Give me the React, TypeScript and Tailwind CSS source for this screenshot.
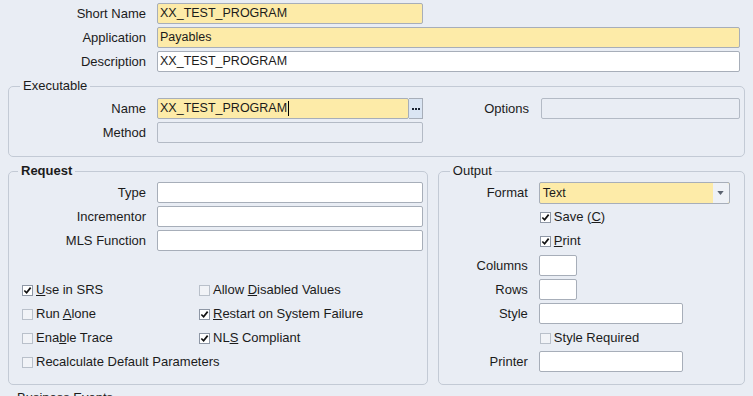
import React from 'react';

const font = { fontFamily: '"Liberation Sans", Arial, sans-serif' };

type Kind = 'yellow' | 'white' | 'disabled';

function Box({ kind, className = '', children }: { kind: Kind; className?: string; children?: React.ReactNode }) {
  const tone =
    kind === 'yellow'
      ? 'bg-[#fdeba8] border-[#a7aeb9]'
      : kind === 'white'
        ? 'bg-white border-[#a7aeb9]'
        : 'bg-[#e9edf4] border-[#b3bac5]';
  return (
    <div className={`h-[21px] border rounded-[2px] flex items-center pl-[2px] text-[12.5px] text-[#1b1b1b] ${tone} ${className}`}>
      {children}
    </div>
  );
}

function Row({ label, labelW, children }: { label: string; labelW: string; children: React.ReactNode }) {
  return (
    <div className="flex items-center">
      <span className={`${labelW} text-right pr-[11px] text-[13px] text-[#1b1b1b] shrink-0`}>{label}</span>
      {children}
    </div>
  );
}

function Check({ on, children }: { on?: boolean; children: React.ReactNode }) {
  return (
    <div className="flex items-center h-[24px] text-[13px] text-[#1b1b1b]">
      <span
        className={`w-[11px] h-[11px] border flex items-center justify-center mr-[3px] shrink-0 ${
          on ? 'bg-white border-[#8e97a5]' : 'bg-[#f1f3f7] border-[#b9c0ca]'
        }`}
      >
        {on && (
          <svg viewBox="0 0 10 10" className="w-[9px] h-[9px]">
            <path d="M1.5 5 L4 7.5 L8.5 1.8" fill="none" stroke="#111" strokeWidth="1.9" />
          </svg>
        )}
      </span>
      <span>{children}</span>
    </div>
  );
}

export default function App() {
  return (
    <div className="w-[753px] h-[396px] overflow-hidden bg-[#e9edf4] pt-[3px]" style={font}>
      {/* header rows */}
      <div className="flex flex-col gap-[3px]">
        <Row label="Short Name" labelW="w-[157px]">
          <Box kind="yellow" className="w-[266px]">XX_TEST_PROGRAM</Box>
        </Row>
        <Row label="Application" labelW="w-[157px]">
          <Box kind="yellow" className="w-[583px]">Payables</Box>
        </Row>
        <Row label="Description" labelW="w-[157px]">
          <Box kind="white" className="w-[583px]">XX_TEST_PROGRAM</Box>
        </Row>
      </div>

      {/* Executable */}
      <fieldset className="mx-[8px] mt-[6px] border border-[#c3cad5] rounded-[5px] pb-[13px]">
        <legend className="ml-[11px] px-[3px] text-[13px] leading-[16px] text-[#1b1b1b]">Executable</legend>
        <div className="flex flex-col gap-[3px] pt-[4px]">
          <div className="flex items-center">
            <Row label="Name" labelW="w-[148px]">
              <Box kind="yellow" className="w-[252px]">
                XX_TEST_PROGRAM<span className="inline-block w-px h-[15px] bg-black ml-px" />
              </Box>
              <div className="w-[14px] h-[21px] border border-l-0 border-[#a7aeb9] bg-[#dae5f3] flex items-center justify-center gap-[1px]">
                <span className="w-[2px] h-[2px] bg-[#1a2433]" />
                <span className="w-[2px] h-[2px] bg-[#1a2433]" />
                <span className="w-[2px] h-[2px] bg-[#1a2433]" />
              </div>
            </Row>
            <span className="w-[118px] text-right pr-[12px] text-[13px] text-[#1b1b1b]">Options</span>
            <Box kind="disabled" className="w-[199px]" />
          </div>
          <Row label="Method" labelW="w-[148px]">
            <Box kind="disabled" className="w-[266px]" />
          </Row>
        </div>
      </fieldset>

      <div className="flex gap-[10px] mx-[8px] mt-[6px]">
        {/* Request */}
        <fieldset className="w-[421px] border border-[#c3cad5] rounded-[5px] pb-[10px]">
          <legend className="ml-[9px] px-[3px] text-[13px] leading-[16px] font-bold text-[#1b1b1b]">Request</legend>
          <div className="flex flex-col gap-[3px] pt-[3px]">
            <Row label="Type" labelW="w-[148px]">
              <Box kind="white" className="w-[266px]" />
            </Row>
            <Row label="Incrementor" labelW="w-[148px]">
              <Box kind="white" className="w-[266px]" />
            </Row>
            <Row label="MLS Function" labelW="w-[148px]">
              <Box kind="white" className="w-[266px]" />
            </Row>
          </div>
          <div className="grid grid-cols-[177px_1fr] pl-[13px] mt-[27px]">
            <Check on><u>U</u>se in SRS</Check>
            <Check>Allow <u>D</u>isabled Values</Check>
            <Check>Run <u>A</u>lone</Check>
            <Check on><u>R</u>estart on System Failure</Check>
            <Check>Ena<u>b</u>le Trace</Check>
            <Check on>NL<u>S</u> Compliant</Check>
            <div className="col-span-2">
              <Check>Recalculate Default Parameters</Check>
            </div>
          </div>
        </fieldset>

        {/* Output */}
        <fieldset className="w-[308px] border border-[#c3cad5] rounded-[5px] pb-[10px]">
          <legend className="ml-[11px] px-[3px] text-[13px] leading-[16px] text-[#1b1b1b]">Output</legend>
          <div className="flex flex-col pt-[3px]">
            <Row label="Format" labelW="w-[100px]">
              <div className="w-[191px] h-[22px] border rounded-[2px] border-[#a7aeb9] bg-[#fdeba8] flex items-center text-[12.5px] text-[#1b1b1b]">
                <span className="flex-1 pl-[3px]">Text</span>
                <span className="w-[16px] h-full bg-[#eef1f6] rounded-r-[2px] flex items-center justify-center">
                  <svg viewBox="0 0 8 5" className="w-[7px] h-[4px]">
                    <path d="M0 0 H8 L4 5 Z" fill="#5b6370" />
                  </svg>
                </span>
              </div>
            </Row>
            <div className="pl-[101px] mt-[1px]">
              <Check on>Save (<u>C</u>)</Check>
              <Check on><u>P</u>rint</Check>
            </div>
            <div className="flex flex-col gap-[3px] mt-[2px]">
              <Row label="Columns" labelW="w-[100px]">
                <Box kind="white" className="w-[38px]" />
              </Row>
              <Row label="Rows" labelW="w-[100px]">
                <Box kind="white" className="w-[38px]" />
              </Row>
              <Row label="Style" labelW="w-[100px]">
                <Box kind="white" className="w-[144px]" />
              </Row>
            </div>
            <div className="pl-[101px] mt-[2px]">
              <Check>Style Required</Check>
            </div>
            <div className="mt-[1px]">
              <Row label="Printer" labelW="w-[100px]">
                <Box kind="white" className="w-[144px]" />
              </Row>
            </div>
          </div>
        </fieldset>
      </div>

      <div className="pl-[17px] mt-[5px] text-[13px] leading-[16px] text-[#1b1b1b]">Business Events</div>
    </div>
  );
}
